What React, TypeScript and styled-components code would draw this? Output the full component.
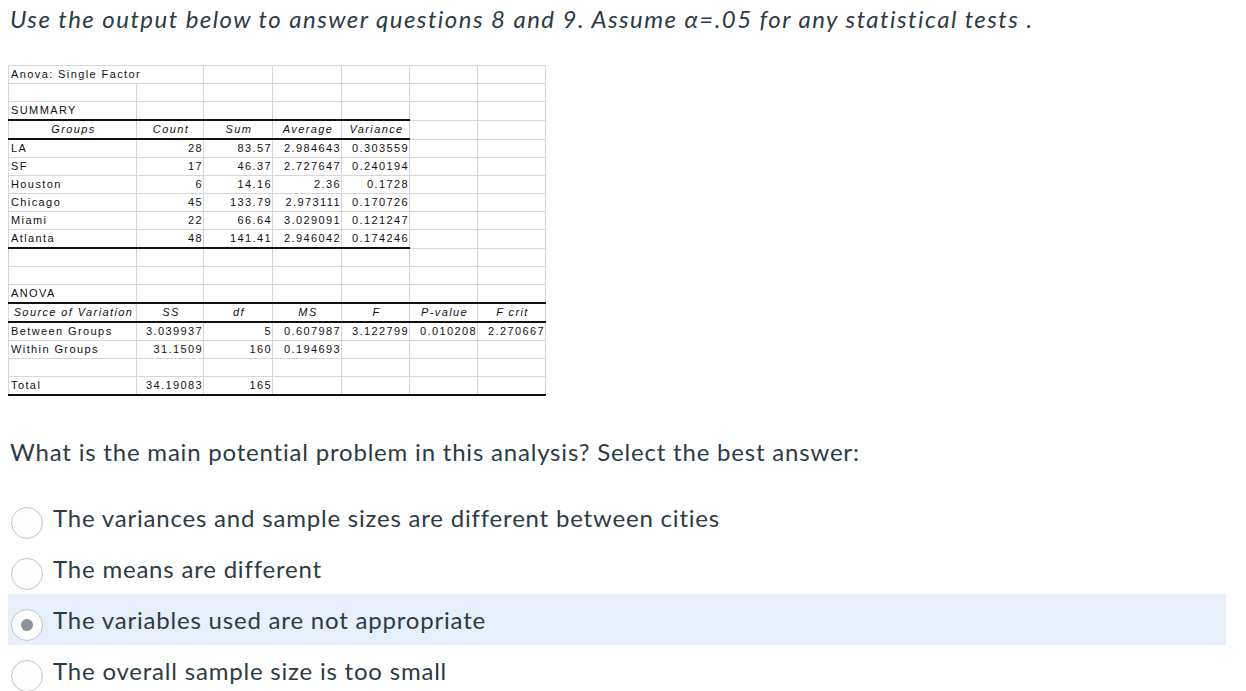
import React from 'react';
import styled, { createGlobalStyle } from 'styled-components';

const GlobalStyle = createGlobalStyle`
  body {
    margin: 0;
    background: #ffffff;
    font-family: Lato, "Noto Sans", sans-serif;
    color: #2d3b45;
  }
`;

const Page = styled.div`
  padding: 4px 20px 0 8px;
`;

const Intro = styled.p`
  margin: 0 0 0 2px;
  font-size: 24px;
  line-height: 29px;
  font-style: italic;
  letter-spacing: 1.45px;
  white-space: nowrap;
`;

const Sheet = styled.table`
  margin-top: 32px;
  border-collapse: collapse;
  table-layout: fixed;
  font-family: "Liberation Sans", Arial, sans-serif;
  font-size: 11px;
  letter-spacing: 1.4px;
  color: #111;
`;

type Align = 'left' | 'center' | 'right';

const Cell = styled.td<{ $align: Align; $italic?: boolean; $heavyBottom?: boolean }>`
  height: 17px;
  padding: 0 0 0 2px;
  border: 1px solid #d6d6d6;
  border-bottom: ${(p) => (p.$heavyBottom ? '2px solid #111' : '1px solid #d6d6d6')};
  text-align: ${(p) => p.$align};
  font-style: ${(p) => (p.$italic ? 'italic' : 'normal')};
  white-space: nowrap;
  overflow: visible;
  line-height: 15px;
`;

const Question = styled.p`
  margin: 41px 0 0 2px;
  font-size: 24px;
  line-height: 29px;
  letter-spacing: 0.8px;
`;

const Choices = styled.div`
  margin-top: 26px;
  display: flex;
  flex-direction: column;
`;

const Choice = styled.label<{ $selected?: boolean }>`
  display: flex;
  align-items: flex-start;
  gap: 10px;
  box-sizing: border-box;
  height: 51px;
  padding-left: 3px;
  background: ${(p) => (p.$selected ? '#e7effa' : 'transparent')};
`;

const Radio = styled.span<{ $checked?: boolean }>`
  flex: none;
  width: 30px;
  height: 30px;
  margin-top: 15px;
  border: 1px solid #c3c7cb;
  border-radius: 50%;
  background: #fdfdfe;
  display: flex;
  align-items: center;
  justify-content: center;

  &::after {
    content: '';
    display: ${(p) => (p.$checked ? 'block' : 'none')};
    width: 12px;
    height: 12px;
    border-radius: 50%;
    background: #8e949b;
  }
`;

const ChoiceText = styled.span`
  padding-top: 11px;
  font-size: 24px;
  line-height: 29px;
  letter-spacing: 0.8px;
  white-space: nowrap;
`;

type SheetCell = { text?: string; align?: Align; italic?: boolean; span?: number };
type SheetRow = { cells: SheetCell[]; heavyBottom?: number };

const widths = [128, 67, 69, 69, 68, 68, 68];

const L = (text: string): SheetCell => ({ text, align: 'left' });
const R = (text: string): SheetCell => ({ text, align: 'right' });
const H = (text: string): SheetCell => ({ text, align: 'center', italic: true });

const rows: SheetRow[] = [
  { cells: [{ text: 'Anova: Single Factor', align: 'left', span: 2 }] },
  { cells: [] },
  { cells: [L('SUMMARY')], heavyBottom: 5 },
  { cells: [H('Groups'), H('Count'), H('Sum'), H('Average'), H('Variance')], heavyBottom: 5 },
  { cells: [L('LA'), R('28'), R('83.57'), R('2.984643'), R('0.303559')] },
  { cells: [L('SF'), R('17'), R('46.37'), R('2.727647'), R('0.240194')] },
  { cells: [L('Houston'), R('6'), R('14.16'), R('2.36'), R('0.1728')] },
  { cells: [L('Chicago'), R('45'), R('133.79'), R('2.973111'), R('0.170726')] },
  { cells: [L('Miami'), R('22'), R('66.64'), R('3.029091'), R('0.121247')] },
  { cells: [L('Atlanta'), R('48'), R('141.41'), R('2.946042'), R('0.174246')], heavyBottom: 5 },
  { cells: [] },
  { cells: [] },
  { cells: [L('ANOVA')], heavyBottom: 7 },
  {
    cells: [H('Source of Variation'), H('SS'), H('df'), H('MS'), H('F'), H('P-value'), H('F crit')],
    heavyBottom: 7,
  },
  {
    cells: [
      L('Between Groups'),
      R('3.039937'),
      R('5'),
      R('0.607987'),
      R('3.122799'),
      R('0.010208'),
      R('2.270667'),
    ],
  },
  { cells: [L('Within Groups'), R('31.1509'), R('160'), R('0.194693')] },
  { cells: [] },
  { cells: [L('Total'), R('34.19083'), R('165')], heavyBottom: 7 },
];

const fillRow = (row: SheetRow) => {
  const out: SheetCell[] = [];
  let used = 0;
  row.cells.forEach((c) => {
    out.push(c);
    used += c.span ?? 1;
  });
  while (used < widths.length) {
    out.push({});
    used += 1;
  }
  return out;
};

const choices = [
  'The variances and sample sizes are different between cities',
  'The means are different',
  'The variables used are not appropriate',
  'The overall sample size is too small',
];

const App: React.FC = () => {
  const selected = 2;

  return (
    <Page>
      <GlobalStyle />
      <Intro>Use the output below to answer questions 8 and 9. Assume α=.05 for any statistical tests .</Intro>

      <Sheet>
        <colgroup>
          {widths.map((w, i) => (
            <col key={i} style={{ width: w }} />
          ))}
        </colgroup>
        <tbody>
          {rows.map((row, r) => {
            let col = 0;
            return (
              <tr key={r}>
                {fillRow(row).map((c, i) => {
                  const start = col;
                  col += c.span ?? 1;
                  return (
                    <Cell
                      key={i}
                      colSpan={c.span}
                      $align={c.align ?? 'left'}
                      $italic={c.italic}
                      $heavyBottom={row.heavyBottom !== undefined && start < row.heavyBottom}
                    >
                      {c.text ?? ''}
                    </Cell>
                  );
                })}
              </tr>
            );
          })}
        </tbody>
      </Sheet>

      <Question>What is the main potential problem in this analysis? Select the best answer:</Question>

      <Choices>
        {choices.map((text, i) => (
          <Choice key={i} $selected={i === selected}>
            <Radio $checked={i === selected} />
            <ChoiceText>{text}</ChoiceText>
          </Choice>
        ))}
      </Choices>
    </Page>
  );
};

export default App;
